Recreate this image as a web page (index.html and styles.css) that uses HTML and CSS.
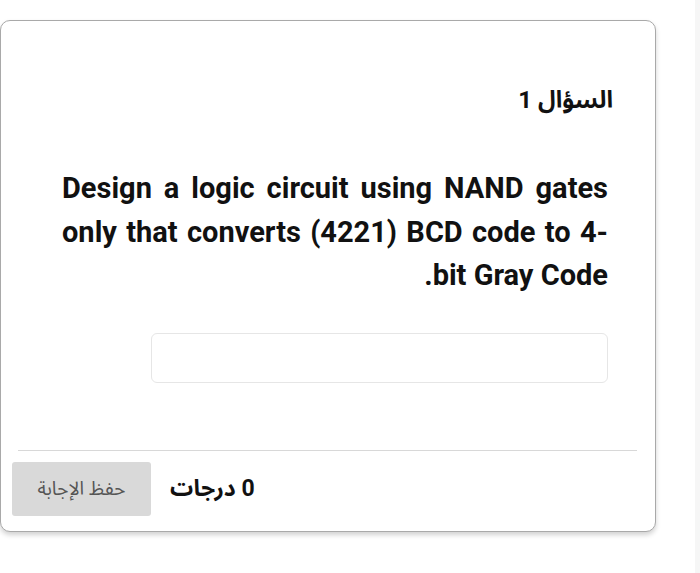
FILE: index.html
```html
<!DOCTYPE html>
<html lang="ar">
<head>
<meta charset="utf-8">
<link rel="stylesheet" href="styles.css">
</head>
<body>
<div class="page">
  <main class="main">
    <section class="card">
      <div class="content">
        <h2 class="title">السؤال 1</h2>
        <p class="question">Design a logic circuit using NAND gates only that converts (4221) BCD code to 4-bit Gray Code.</p>
        <div class="answer"></div>
      </div>
      <hr class="divider">
      <div class="footer">
        <span class="grade">0 درجات</span>
        <button class="save">حفظ الإجابة</button>
      </div>
    </section>
  </main>
  <div class="strip"></div>
</div>
</body>
</html>
```

FILE: styles.css
```css
html, body {
  margin: 0;
  padding: 0;
  background: #ffffff;
}
.page {
  display: flex;
  height: 573px;
  overflow: hidden;
}
.main {
  width: 695px;
  flex: none;
}
.strip {
  flex: 1;
  background: #f6f6f6;
}
.card {
  direction: rtl;
  box-sizing: border-box;
  margin-top: 20px;
  width: 656px;
  height: 512px;
  border: 1px solid #a9a9a9;
  border-radius: 10px;
  box-shadow: 0 3px 5px rgba(0,0,0,0.18);
  background: #fff;
  display: flex;
  flex-direction: column;
  font-family: Roboto, "Noto Sans Arabic", "DejaVu Sans", sans-serif;
  color: #111;
}
.content {
  padding: 64px 42px 0 47px;
}
.title {
  margin: 0;
  font-size: 24px;
  line-height: 30px;
  font-weight: 700;
}
.question {
  margin: 52px 5px 0 14px;
  font-size: 29px;
  line-height: 43.5px;
  font-weight: 700;
  text-align: justify;
}
.answer {
  margin: 35px 5px 0 0;
  width: 457px;
  height: 50px;
  box-sizing: border-box;
  border: 1px solid #e6e6e6;
  border-radius: 6px;
}
.divider {
  margin: 67px 18px 0 17px;
  border: 0;
  border-top: 1px solid #d8d8d8;
  height: 0;
}
.footer {
  display: flex;
  justify-content: flex-end;
  align-items: center;
  gap: 19px;
  padding: 11px 0 0 11px;
}
.grade {
  font-size: 23px;
  font-weight: 700;
}
.save {
  width: 139px;
  height: 54px;
  border: 0;
  border-radius: 3px;
  background: #d9d9d9;
  color: #555;
  font-family: "Noto Sans Arabic", "DejaVu Sans", sans-serif;
  font-size: 19px;
}
```
